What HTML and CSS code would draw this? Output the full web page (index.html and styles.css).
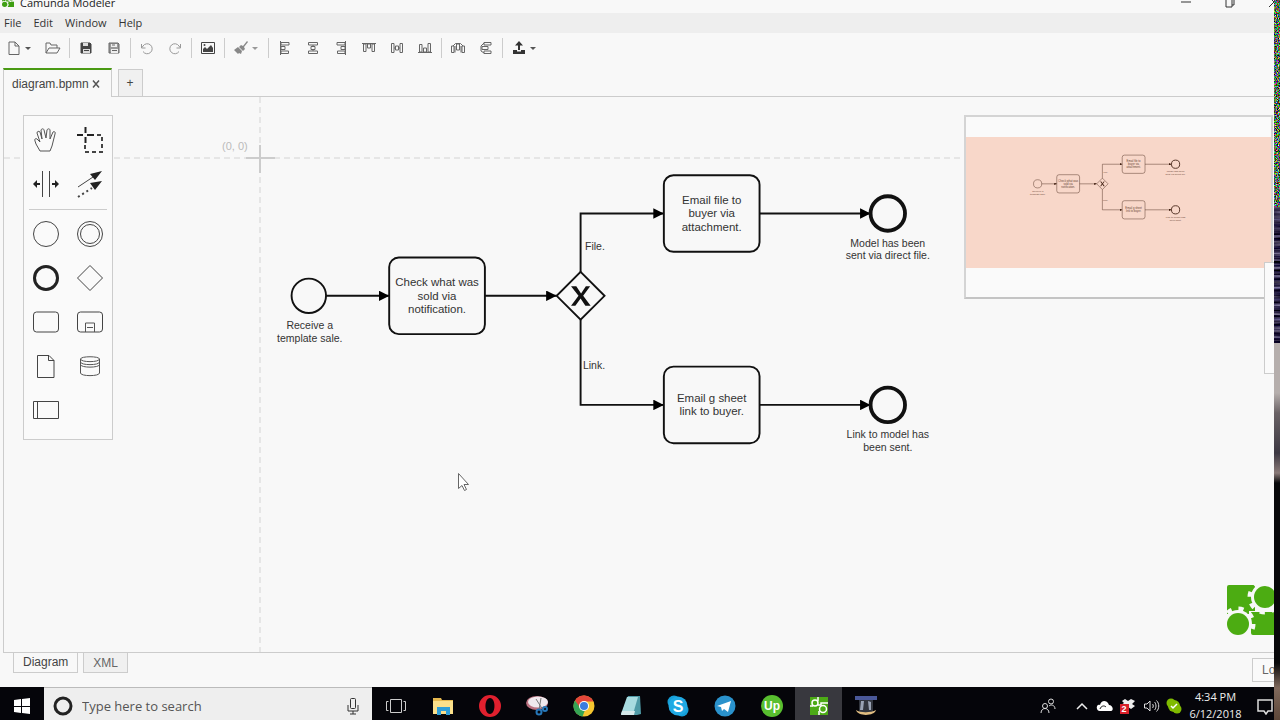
FILE: index.html
```html
<!DOCTYPE html>
<html lang="en">
<head>
<meta charset="utf-8">
<title>Camunda Modeler</title>
<link rel="stylesheet" href="styles.css">
</head>
<body>
<svg class="defs" aria-hidden="true">
  <defs>
    <marker id="arrow" viewBox="0 0 10 10" refX="10" refY="5" markerWidth="11" markerHeight="11" markerUnits="userSpaceOnUse" orient="auto"><path d="M0 0 10 5 0 10z"/></marker>
    <g id="process">
      <g class="flow">
        <path d="M69 144H135"/><path d="M235 144H310"/>
        <path d="M335 119V58H422"/><path d="M335 169V258H422"/>
        <path d="M522 58H638"/><path d="M522 258H638"/>
      </g>
      <g class="shape">
        <circle cx="51" cy="144" r="18"/>
        <rect x="135" y="104" width="100" height="80" rx="10"/>
        <rect x="422" y="18" width="100" height="80" rx="10"/>
        <rect x="422" y="218" width="100" height="80" rx="10"/>
        <path d="M335 119 360 144 335 169 310 144z"/>
        <circle class="end" cx="656" cy="58" r="18"/>
        <circle class="end" cx="656" cy="258" r="18"/>
      </g>
      <path class="cross" d="M325 134h5.500l5 7.500 5-7.500h4.500l-7.300 10 7.800 10.500h-5.500l-5-7.800-5.500 7.800h-4.500l7.800-10.500z"/>
      <g class="task-text">
        <text x="185" y="134">Check what was</text><text x="185" y="148">sold via</text><text x="185" y="162">notification.</text>
        <text x="472" y="48">Email file to</text><text x="472" y="62">buyer via</text><text x="472" y="76">attachment.</text>
        <text x="472" y="255">Email g sheet</text><text x="472" y="269">link to buyer.</text>
      </g>
      <g class="label-text">
        <text x="52" y="179">Receive a</text><text x="52" y="192">template sale.</text>
        <text x="350" y="96">File.</text><text x="349" y="221">Link.</text>
        <text x="656" y="93">Model has been</text><text x="656" y="106">sent via direct file.</text>
        <text x="656" y="293">Link to model has</text><text x="656" y="306">been sent.</text>
      </g>
    </g>
    <g id="logo">
      <path d="M2 0H28V26H22V29H0V2Q0 0 2 0zM25 27H50V50H26Q24 50 24 48V27z"/>
      <g class="gear">
        <circle class="hub" cx="38" cy="12" r="14"/><circle class="teeth" cx="38" cy="12" r="15"/>
        <circle class="hub" cx="11" cy="39" r="14"/><circle class="teeth" cx="11" cy="39" r="15"/>
      </g>
      <circle cx="38" cy="12" r="11"/><circle cx="11" cy="39" r="11"/>
    </g>
    <filter id="static" x="0" y="0" width="1" height="1" color-interpolation-filters="sRGB"><feTurbulence type="fractalNoise" baseFrequency="0.9" numOctaves="2"/><feColorMatrix values="3 0 0 0 -1.200  0 3 0 0 -1.100  0 0 3 0 -1.200  0 0 0 0 1"/></filter>
    <filter id="bands" x="0" y="0" width="1" height="1" color-interpolation-filters="sRGB"><feTurbulence type="fractalNoise" baseFrequency="0.02 0.35" numOctaves="2"/><feColorMatrix values="1.200 0 0 0 -.4  1.200 0 0 0 -.430  1.200 0 .2 0 -.4  0 0 0 0 1"/></filter>
  </defs>
</svg>
<div class="desktop">
  <main class="app">
    <header class="titlebar">
      <svg class="app-icon" viewBox="0 0 50 50"><use href="#logo"/></svg>
      <h1>Camunda Modeler</h1>
      <div class="window-buttons">
        <button aria-label="Minimize"><svg viewBox="0 0 12 12"><path d="M1 6h10"/></svg></button>
        <button aria-label="Restore"><svg viewBox="0 0 12 12"><path d="M2 3h6v8H2zM4 3V1h6v8H8"/></svg></button>
        <button aria-label="Close"><svg viewBox="0 0 12 12"><path d="M1 1l10 10M11 1 1 11"/></svg></button>
      </div>
    </header>
    <nav class="menubar" aria-label="Main menu">
      <button>File</button><button>Edit</button><button>Window</button><button>Help</button>
    </nav>
    <div class="toolbar">
      <div class="group">
        <div class="split">
          <button class="tool" aria-label="New"><svg viewBox="0 0 16 16"><path d="M3 2h6l4 4v8.500H3zM9 2v4h4"/></svg></button>
          <button class="caret" aria-label="New options"></button>
        </div>
        <button class="tool" aria-label="Open"><svg viewBox="0 0 16 16"><path d="M1 13V3h4l1 2h6v3M1 13l3-5h11l-3 5z"/></svg></button>
      </div>
      <div class="group">
        <button class="tool dark" aria-label="Save"><svg viewBox="0 0 16 16"><path fill="#444" d="M3 3h9l1 1v9H3z"/><path fill="#ddd" stroke="none" d="M5 3h5v3H5zM5 9h7v4H5z"/><path d="M6 10.500h5"/></svg></button>
        <button class="tool" aria-label="Save as"><svg viewBox="0 0 16 16"><path fill="#999" d="M3 3h9l1 1v9H3z"/><path fill="#eee" stroke="none" d="M5 4h6v3H5zM5 9h7v4H5z"/><path d="M6 10.500h5M6 5h3"/></svg></button>
      </div>
      <div class="group">
        <button class="tool pale" aria-label="Undo"><svg viewBox="0 0 16 16"><path d="M4 11.500A5 5 0 1 0 4 6L3 7.500M2.500 4v4H6.500"/></svg></button>
        <button class="tool pale" aria-label="Redo"><svg viewBox="0 0 16 16"><path d="M12 11.500A5 5 0 1 1 12 6l1 1.500M13.500 4v4H9.500"/></svg></button>
      </div>
      <div class="group">
        <button class="tool dark" aria-label="Export as image"><svg viewBox="0 0 16 16"><path d="M1.500 2.500h13v11h-13z"/><path fill="#444" stroke="none" d="M3 12V9l2-2 2 2 4-4 2 3v4z"/><circle cx="4.500" cy="5" r="1" fill="#444" stroke="none"/></svg></button>
      </div>
      <div class="group">
        <div class="split">
          <button class="tool pale" aria-label="Set color"><svg viewBox="0 0 16 16"><path fill="#888" stroke="none" d="M14 1l1 1-4 5 1 2-2 2-4-4 2-2 2 1zM5 7l4 4-1 3-2-1-1 1-4-4z"/></svg></button>
          <button class="caret pale" aria-label="Color options"></button>
        </div>
      </div>
      <div class="group">
        <button class="tool" aria-label="Align left"><svg viewBox="0 0 16 16"><path d="M3.500 1v14M4 2.500h8v2.500H4zM4 6.500h4v3H4zM4 11h7.500v2.500H4z"/></svg></button>
        <button class="tool" aria-label="Align center"><svg viewBox="0 0 16 16"><path d="M3.500 2.500h9v2.500h-9zM6 6.500h4v3H6zM3.500 11h9v2.500h-9zM8 5v1M8 10v1"/></svg></button>
        <button class="tool" aria-label="Align right"><svg viewBox="0 0 16 16"><path d="M12.500 1v14M4 2.500h8v2.500H4zM8 6.500h4v3H8zM4.500 11H12v2.500H4.500z"/></svg></button>
        <button class="tool" aria-label="Align top"><svg viewBox="0 0 16 16"><path d="M1 3.500h14M2.500 4H5v7.500H2.500zM6.500 4h3v4h-3zM11 4h2.500v7.500H11z"/></svg></button>
        <button class="tool" aria-label="Align middle"><svg viewBox="0 0 16 16"><path d="M2.500 3.500H5v9H2.500zM6.500 6h3v4h-3zM11 3.500h2.500v9H11zM5 8h1M10 8h1"/></svg></button>
        <button class="tool" aria-label="Align bottom"><svg viewBox="0 0 16 16"><path d="M1 12.500h14M2.500 4.500H5V12H2.500zM6.500 8h3v4h-3zM11 3.500h2.500V12H11z"/></svg></button>
      </div>
      <div class="group">
        <button class="tool" aria-label="Distribute horizontally"><svg viewBox="0 0 16 16"><path d="M1.500 6H4v6.500H1.500zM6.500 4h3v6h-3zM12 6h2.500v6.500H12zM3 6l2.500-2.500h5L13 6M5 6v6.500M11 6v6.500"/></svg></button>
        <button class="tool" aria-label="Distribute vertically"><svg viewBox="0 0 16 16"><path d="M6 2.500h7V5H6zM4 6.500h6v3H4zM6 11h7v2.500H6zM6 3 3 6v5l3 2"/></svg></button>
      </div>
      <div class="group">
        <div class="split">
          <button class="tool dark" aria-label="Deploy"><svg viewBox="0 0 16 16"><path fill="#333" stroke="none" d="M8 1l4 4.500H9V10H7V5.500H4zM2 10h4v1.500h4V10h4v4H2z"/></svg></button>
          <button class="caret" aria-label="Deploy options"></button>
        </div>
      </div>
    </div>
    <div class="tabs">
      <div class="tab"><span>diagram.bpmn</span><button aria-label="Close tab"><svg viewBox="0 0 8 8"><path d="M1 0.500l6 7M7 .5l-6 7"/></svg></button></div>
      <button class="add-tab" aria-label="Create diagram">+</button>
    </div>
    <section class="canvas" aria-label="Diagram canvas">
      <svg class="drawing">
        <path class="axis" d="M256 0V900M0 61H3000"/>
        <path class="origin" d="M242 61h29M256 48v28"/>
        <text class="coords" x="218" y="53">(0, 0)</text>
        <g transform="translate(256 61) scale(.957)"><use href="#process"/></g>
        <path class="pointer" d="M454.500 376.500v15l3.500-3 2.500 5 2-1-2.500-5h4.500z"/>
      </svg>
      <div class="palette">
        <button aria-label="Hand tool"><svg viewBox="0 0 30 30"><path class="thin" d="M9 26 5 19l-1-3c-1-2 1-3 2-2l3 3L6 8c0-2 2-2 3-1l2 7-1-9c1-2 3-1 3 0l2 8 1-8c1-2 3-1 3 0v9l3-7c1-1 3 0 2 2l-3 12-2 5z"/></svg></button>
        <button aria-label="Lasso tool"><svg viewBox="0 0 30 30"><path class="bold" d="M2 10h6M12 10h7M10.500 2v6M10.500 12v6"/><path class="lasso" d="M22 10h5v17H10v-7"/></svg></button>
        <button aria-label="Space tool"><svg viewBox="0 0 30 30"><path d="M11.500 2v26M18.500 2v26"/><path class="solid" d="M2 15l4-4v3h3v2H6v3zM28 15l-4-4v3h-3v2h3v3z"/></svg></button>
        <button aria-label="Global connect"><svg viewBox="0 0 30 30"><path d="M3 18 18 8"/><path class="dots" d="M3 28l14-9"/><path class="solid" d="M27 2 15 5l5 6zM27 12l-12 2 5 7z"/></svg></button>
        <hr>
        <button aria-label="Start event"><svg viewBox="0 0 30 30"><circle cx="15" cy="15" r="12.500"/></svg></button>
        <button aria-label="Intermediate event"><svg viewBox="0 0 30 30"><circle cx="15" cy="15" r="12.500"/><circle cx="15" cy="15" r="9.500"/></svg></button>
        <button aria-label="End event"><svg viewBox="0 0 30 30"><circle class="thick" cx="15" cy="15" r="11.500"/></svg></button>
        <button aria-label="Gateway"><svg viewBox="0 0 30 30"><path d="M15 2.500 27.500 15 15 27.500 2.500 15z"/></svg></button>
        <button aria-label="Task"><svg viewBox="0 0 30 30"><rect x="2.500" y="5" width="25" height="20" rx="3"/></svg></button>
        <button aria-label="Sub process"><svg viewBox="0 0 30 30"><rect x="2.500" y="5" width="25" height="20" rx="3"/><path class="thin" d="M10.500 25v-9h9v9M12 20.500h6"/></svg></button>
        <button aria-label="Data object"><svg viewBox="0 0 30 30"><path d="M6.500 4.500H18l5 5v17H6.500zM17.500 4.500v5H23"/></svg></button>
        <button aria-label="Data store"><svg viewBox="0 0 30 30"><path class="thin" d="M5.500 8v14c0 3.500 19 3.500 19 0V8c0-3-19-3-19 0c0 3.500 19 3.500 19 0M5.500 11c0 3.500 19 3.500 19 0M5.500 13.500c0 3.500 19 3.500 19 0"/></svg></button>
        <button aria-label="Pool"><svg viewBox="0 0 30 30"><path d="M2.500 6.500h25v17h-25zM6.500 6.500v17"/></svg></button>
      </div>
      <div class="minimap">
        <svg><g transform="translate(60 34) scale(.228)"><use href="#process"/></g></svg>
        <div class="viewport"></div>
      </div>
      <button class="panel-toggle" aria-label="Properties panel"></button>
      <a class="powered" href="#" aria-label="bpmn.io"><svg viewBox="0 0 50 50"><use href="#logo"/></svg></a>
    </section>
    <div class="views">
      <button class="active">Diagram</button><button>XML</button>
      <button class="log">Log</button>
    </div>
  </main>
  <footer class="taskbar">
    <button class="start" aria-label="Start"><svg viewBox="0 0 16 16"><path fill="#fff" d="M0 2l7-1v7H0zM8 1l8-1v8H8zM0 9h7v6l-7-1zM8 9h8v7l-8-1z"/></svg></button>
    <label class="search">
      <svg viewBox="0 0 20 20"><circle cx="10" cy="10" r="8" fill="none" stroke="#222" stroke-width="3"/></svg>
      <input type="text" placeholder="Type here to search" aria-label="Search">
      <svg viewBox="0 0 20 20" fill="none" stroke="#333"><rect x="7.500" y="2.500" width="5" height="10" rx="1"/><path d="M5 9v6h10V9M10 15v3M7 18h6"/></svg>
    </label>
    <div class="apps">
      <button aria-label="Task view"><svg viewBox="0 0 22 22" fill="none" stroke="#ccc"><path d="M5.500 4.500h11v13h-11zM3.500 6.500h-2v9h2M18.500 6.500h2v9h-2"/></svg></button>
      <button aria-label="File Explorer"><svg viewBox="0 0 22 22"><path fill="#e6b94f" d="M1 3h8l1 2h11v14H1z"/><path fill="#fbe08b" d="M1 6h20v13H1z"/><path fill="#2f9fd8" d="M5 12h13v8h-4v-4H9v4H5z"/></svg></button>
      <button aria-label="Opera"><svg viewBox="0 0 22 22"><path fill="#e0202e" fill-rule="evenodd" d="M11 0a11 11 0 1 0 0 22 11 11 0 0 0 0-22M11 3c6 0 6 16 0 16S5 3 11 3"/></svg></button>
      <button aria-label="Snipping Tool"><svg viewBox="0 0 22 22"><ellipse cx="11" cy="8" rx="11" ry="7" fill="#b9707f"/><ellipse cx="12" cy="7" rx="10" ry="5.500" fill="#f0e9ee"/><path d="M10 4l7 11M15 3l-2 12" stroke="#777"/><g fill="none" stroke="#2677b8" stroke-width="2"><circle cx="13" cy="17" r="2.500"/><circle cx="19" cy="14" r="2"/></g></svg></button>
      <button aria-label="Chrome"><svg viewBox="0 0 22 22"><circle cx="11" cy="11" r="10.500" fill="#f6c62f"/><path fill="#e4463a" d="M2 5.500a10.500 10.500 0 0 1 18.500 1H11l-5 6z"/><path fill="#35a455" d="M2 5.500 8 14l4 1-2.500 6.500A10.500 10.500 0 0 1 2 5.500"/><circle cx="11" cy="11" r="5" fill="#fff"/><circle cx="11" cy="11" r="4" fill="#3b7de0"/></svg></button>
      <button aria-label="Notepad"><svg viewBox="0 0 22 22"><path fill="#4f9aa6" d="M8 1h12l1 18-4 1H1z"/><path fill="#a8dbe0" d="M7 2h11l-5 17H1z"/><path fill="#d5e8ea" d="M2 16h13l-1 4H1z"/></svg></button>
      <button aria-label="Skype"><svg viewBox="0 0 22 22"><circle cx="7" cy="7" r="6.500" fill="#159fd8"/><circle cx="15" cy="15" r="6.500" fill="#159fd8"/><circle cx="11" cy="11" r="9.500" fill="#20a9e3"/><text x="11" y="17" class="badge-big">S</text></svg></button>
      <button aria-label="Telegram"><svg viewBox="0 0 22 22"><circle cx="11" cy="11" r="10.500" fill="#2a92cc"/><path fill="#fff" d="M3 11l14-5-3 11-4-3-2 2-1-4z"/></svg></button>
      <button aria-label="Upwork"><svg viewBox="0 0 22 22"><circle cx="11" cy="11" r="11" fill="#58be2f"/><text x="11" y="15" class="badge-mid">Up</text></svg></button>
      <button class="current" aria-label="Camunda Modeler"><svg viewBox="0 0 22 22"><path fill="#4caa16" d="M2 2h18v18H2z"/><g fill="#4caa16" stroke="#fff" stroke-width="1.500"><path d="M10 2v4M2 11h3M10 10h3V8h7M11 20v-4"/><circle cx="7" cy="8" r="3"/><circle cx="15" cy="14" r="3.500"/></g></svg></button>
      <button aria-label="Video editor"><svg viewBox="0 0 22 22"><path fill="#4a5899" d="M0 1h22v4H0z"/><path fill="#32363f" d="M4 5h14v12H4z"/><path fill="#9aa3b5" d="M6 6h3l-1 9H5zM13 6l3 1v8h-2z"/><path fill="#e0bd82" d="M1 15c4 3 15 3 20 0-1 6-18 7-20 0"/></svg></button>
    </div>
    <div class="tray">
      <button class="people" aria-label="People"><svg viewBox="0 0 18 18" fill="none" stroke="#ddd"><circle cx="6" cy="9" r="2.500"/><path d="M2 16c0-6 8-6 8 0"/><circle cx="12" cy="4.500" r="2.500"/><path d="M10 9c2-2 6-1 6 3"/></svg></button>
      <button aria-label="Show hidden icons"><svg viewBox="0 0 18 18" fill="none" stroke="#eee" stroke-width="1.500"><path d="M4 12l5-5 5 5"/></svg></button>
      <button aria-label="OneDrive"><svg viewBox="0 0 18 18"><path fill="#fff" d="M1 12c-1-3 1-5 3-4 1-5 6-5 8-2l1 2c4 0 5 6 2 6H5c-2 0-3 0-4-2"/><path d="M4 12c1-3 4-4 6-2" fill="none" stroke="#111"/></svg></button>
      <button aria-label="Dropbox"><svg viewBox="0 0 18 18"><path fill="#eee" d="M6 2l3 2 3-2 4 2-3 3 3 2-4 3-3-2-4 1-3-3 3-2-2-2z"/><path fill="#d9202a" d="M1 7h9v10H1z"/><text x="5" y="15" class="badge-small">2</text></svg></button>
      <button aria-label="Volume"><svg viewBox="0 0 18 18" fill="none" stroke="#ddd"><path d="M2.500 7h2.500l3-3v10l-3-3H2.500zM10.500 7c1 1 1 3 0 4M12.500 5c2 2 2 6 0 8M14.500 3.500c3 3 3 8 0 11"/></svg></button>
      <button aria-label="Skype status"><svg viewBox="0 0 18 18"><circle cx="6" cy="6" r="4.500" fill="#7fba00"/><circle cx="12" cy="12" r="4.500" fill="#7fba00"/><circle cx="9" cy="9" r="6" fill="#7fba00"/><path d="M6 9l2 2 4-4" fill="none" stroke="#fff" stroke-width="1.500"/></svg></button>
      <time class="clock" datetime="2018-06-12T16:34"><span>4:34 PM</span><span>6/12/2018</span></time>
      <button aria-label="Notifications"><svg viewBox="0 0 18 18" fill="none" stroke="#ddd" stroke-width="1.500"><path d="M2 3h14v11h-4l-2 3-2-3H2z"/></svg></button>
    </div>
  </footer>
  <aside class="edge" aria-hidden="true">
    <svg><rect width="100%" height="207" filter="url(#static)"/></svg>
    <svg><rect width="100%" height="136" filter="url(#bands)"/></svg>
    <div class="wall"></div>
  </aside>
</div>
</body>
</html>
```
FILE: styles.css
```css
* { box-sizing: border-box; }
body {
  margin: 0;
  background: #f8f8f8;
  color: #444;
  font: 11px/16px "Open Sans", "Noto Sans", sans-serif;
  overflow: hidden;
}
button {
  margin: 0; padding: 0; border: 0;
  background: none; color: inherit; font: inherit;
}
svg { display: block; flex: none; }
.defs { position: absolute; width: 0; height: 0; }
.desktop {
  display: grid;
  grid-template-columns: minmax(0, 1fr) 6px;
  grid-template-rows: minmax(0, 1fr) 33px;
  height: 100vh;
}
.app { display: flex; flex-direction: column; overflow: hidden; }

.titlebar {
  display: flex; align-items: flex-end; gap: 6px;
  height: 13px; flex: none;
  padding: 0 0 2px 2px;
  overflow: hidden;
}
.titlebar h1 { margin: 0; font: inherit; color: #222; }
.app-icon { width: 12px; height: 12px; margin-bottom: 4px; fill: #3f9f13; }
.gear .hub { fill: #f8f8f8; }
.gear .teeth { fill: none; stroke: #f8f8f8; stroke-width: 5; stroke-dasharray: 5 6.780; }
.window-buttons { display: flex; gap: 32px; margin: 0 -6px 3px auto; }
.window-buttons svg { width: 12px; height: 12px; fill: none; stroke: #333; }

.menubar {
  display: flex; gap: 12px; flex: none;
  height: 20px; padding: 0 4px;
  background: #eee; color: #333;
}

.toolbar { display: flex; align-items: center; height: 30px; flex: none; }
.group { display: flex; align-items: center; gap: 8px; height: 20px; padding: 0 6px; border-left: 1px solid #ccc; }
.group:first-child { border-left: 0; padding-left: 4px; }
.split { display: flex; }
.tool { display: grid; place-items: center; width: 20px; height: 20px; }
.tool svg { width: 16px; height: 16px; fill: none; stroke: #666; }
.tool.dark svg { stroke: #444; }
.tool.pale svg { stroke: #999; }
.caret { display: grid; place-items: center start; width: 11px; padding-left: 1px; }
.caret::before { content: ""; border: 3px solid transparent; border-top-color: #555; border-bottom: 0; }
.caret.pale::before { border-top-color: #999; }

.tabs {
  display: flex; align-items: flex-end; flex: none;
  height: 34px; padding-left: 3px;
  font-family: "Liberation Sans", sans-serif;
  font-size: 12px;
}
.tab {
  display: flex; align-items: center; justify-content: space-between;
  width: 109px; height: 29px; padding: 0 11px 0 8px;
  border: 1px solid #ccc; border-top: 2px solid #4a9a14; border-bottom: 0;
}
.tab svg { width: 8px; height: 8px; stroke: #555; stroke-width: 1.5; }
.tabs::after { content: ""; flex: 1; border-bottom: 1px solid #ccc; }
.add-tab {
  display: grid; place-items: center;
  width: 31px; height: 28px; padding-left: 6px;
  border-bottom: 1px solid #ccc; border-right: 1px solid #ccc;
  background: linear-gradient(#ccc, #ccc) 6px 0 / 1px 100% no-repeat, linear-gradient(#ccc, #ccc) 6px 0 / 100% 1px no-repeat, linear-gradient(90deg, #f8f8f8 6px, #f0f0f0 6px);
}

.canvas {
  position: relative; flex: 1; min-height: 0;
  margin-left: 3px;
  border-left: 1px solid #ccc; border-bottom: 1px solid #ccc;
  overflow: hidden;
}
.drawing { width: 100%; height: 100%; }
.axis { stroke: #d4d4d4; stroke-width: 1; stroke-dasharray: 6 4; }
.origin { stroke: #ccc; stroke-width: 2; }
.coords { font: 11px "Liberation Sans", sans-serif; fill: #bbb; }
.flow path { fill: none; stroke: #111; stroke-width: 2; marker-end: url(#arrow); }
.shape > * { fill: none; stroke: #111; stroke-width: 2; }
.shape .end { stroke-width: 4; }
.cross { fill: #111; }
.task-text, .label-text { text-anchor: middle; fill: #333; font: 12px "Liberation Sans", sans-serif; }
.label-text { font-size: 11px; }
.pointer { fill: #fff; stroke: #666; }

.palette {
  position: absolute; left: 19px; top: 18px;
  display: grid; grid-template-columns: 44px 44px;
  padding: 2px 0 7px;
  border: 1px solid #ccc; background: #fafafa;
}
.palette hr { grid-column: 1 / -1; width: 78px; margin: 3px auto 2px; border: 0; border-top: 1px solid #ccc; }
.palette button { display: grid; place-items: center; height: 44px; }
.palette svg { width: 30px; height: 30px; fill: none; stroke: #444; }
.palette .thin { stroke: #555; }
.palette .bold { stroke: #222; stroke-width: 2; }
.palette .thick { stroke: #222; stroke-width: 3; }
.palette .lasso { stroke-width: 2; stroke-dasharray: 4 3; }
.palette .dots { stroke-width: 2; stroke-dasharray: 2 3; }
.palette .solid { fill: #222; stroke: none; }

.minimap {
  position: absolute; right: 1px; top: 18px;
  width: 309px; height: 184px;
  border: 2px solid #d4d4d4; border-bottom-color: #c4c4c4; background: #fafafa;
  overflow: hidden;
}
.minimap svg { width: 100%; height: 100%; }
.viewport { position: absolute; inset: 20px 0 29px; background: rgba(244, 112, 56, .25); }
.panel-toggle {
  position: absolute; right: 0; top: 165px;
  width: 10px; height: 112px;
  border: 1px solid #ccc; border-right: 0; background: #fafafa;
}
.powered { position: absolute; right: -3px; bottom: 17px; }
.powered svg { width: 50px; height: 50px; fill: #4cac12; }

.views {
  display: flex; align-items: flex-start; gap: 5px; flex: none;
  height: 34px; padding-left: 10px;
  margin-left: 3px;
  font-family: "Liberation Sans", sans-serif;
  font-size: 12px;
}
.views button { height: 20px; padding: 0 9px; border: 1px solid #ccc; border-top: 0; background: #f0f0f0; color: #666; }
.views .active { margin-top: -1px; height: 21px; background: #f8f8f8; color: #444; }
.views .log { width: 40px; height: 24px; flex: none; margin: 5px -18px 0 auto; border: 1px solid #ccc; background: #fafafa; }

.taskbar { grid-row: 2; display: flex; background: #05050a; color: #eee; overflow: hidden; }
.taskbar button { display: grid; place-items: center; }
.start { width: 44px; padding-top: 4px; }
.start svg { width: 16px; height: 16px; }
.search {
  display: flex; align-items: center; gap: 9px;
  width: 328px; padding: 4px 9px 0;
  border-top: 1px solid #bbb; background: #eee;
}
.search svg { width: 20px; height: 20px; }
.search input { flex: 1; min-width: 0; padding: 0; border: 0; background: none; font: 13px/20px "Open Sans", "Noto Sans", sans-serif; }
.search input::placeholder { color: #555; opacity: 1; }
.apps { display: flex; }
.apps button { width: 47px; padding-top: 4px; }
.apps .current { background: #38383e; }
.apps svg { width: 22px; height: 22px; }
.badge-big, .badge-mid, .badge-small { fill: #fff; text-anchor: middle; font: bold 16px "Liberation Sans", sans-serif; }
.badge-mid { font-size: 12px; }
.badge-small { font-size: 9px; }
.tray { display: flex; align-items: center; gap: 5px; margin-left: auto; padding-top: 4px; }
.tray svg { width: 18px; height: 18px; }
.tray .people { margin-right: 11px; }
.clock { display: flex; flex-direction: column; align-items: center; width: 55px; margin-right: 8px; padding-bottom: 2px; line-height: 17px; }

.edge { grid-column: 2; grid-row: 1 / 3; display: flex; flex-direction: column; overflow: hidden; }
.edge svg { width: 6px; height: 207px; }
.edge svg + svg { height: 136px; }
.wall { flex: 1; background: linear-gradient(#b5aeac 0 50px, #6a6265 70px, #3c3842 110px, #8a7a78 130px, #08080a 140px 320px, #80695c 345px, #5c4638); }
```
